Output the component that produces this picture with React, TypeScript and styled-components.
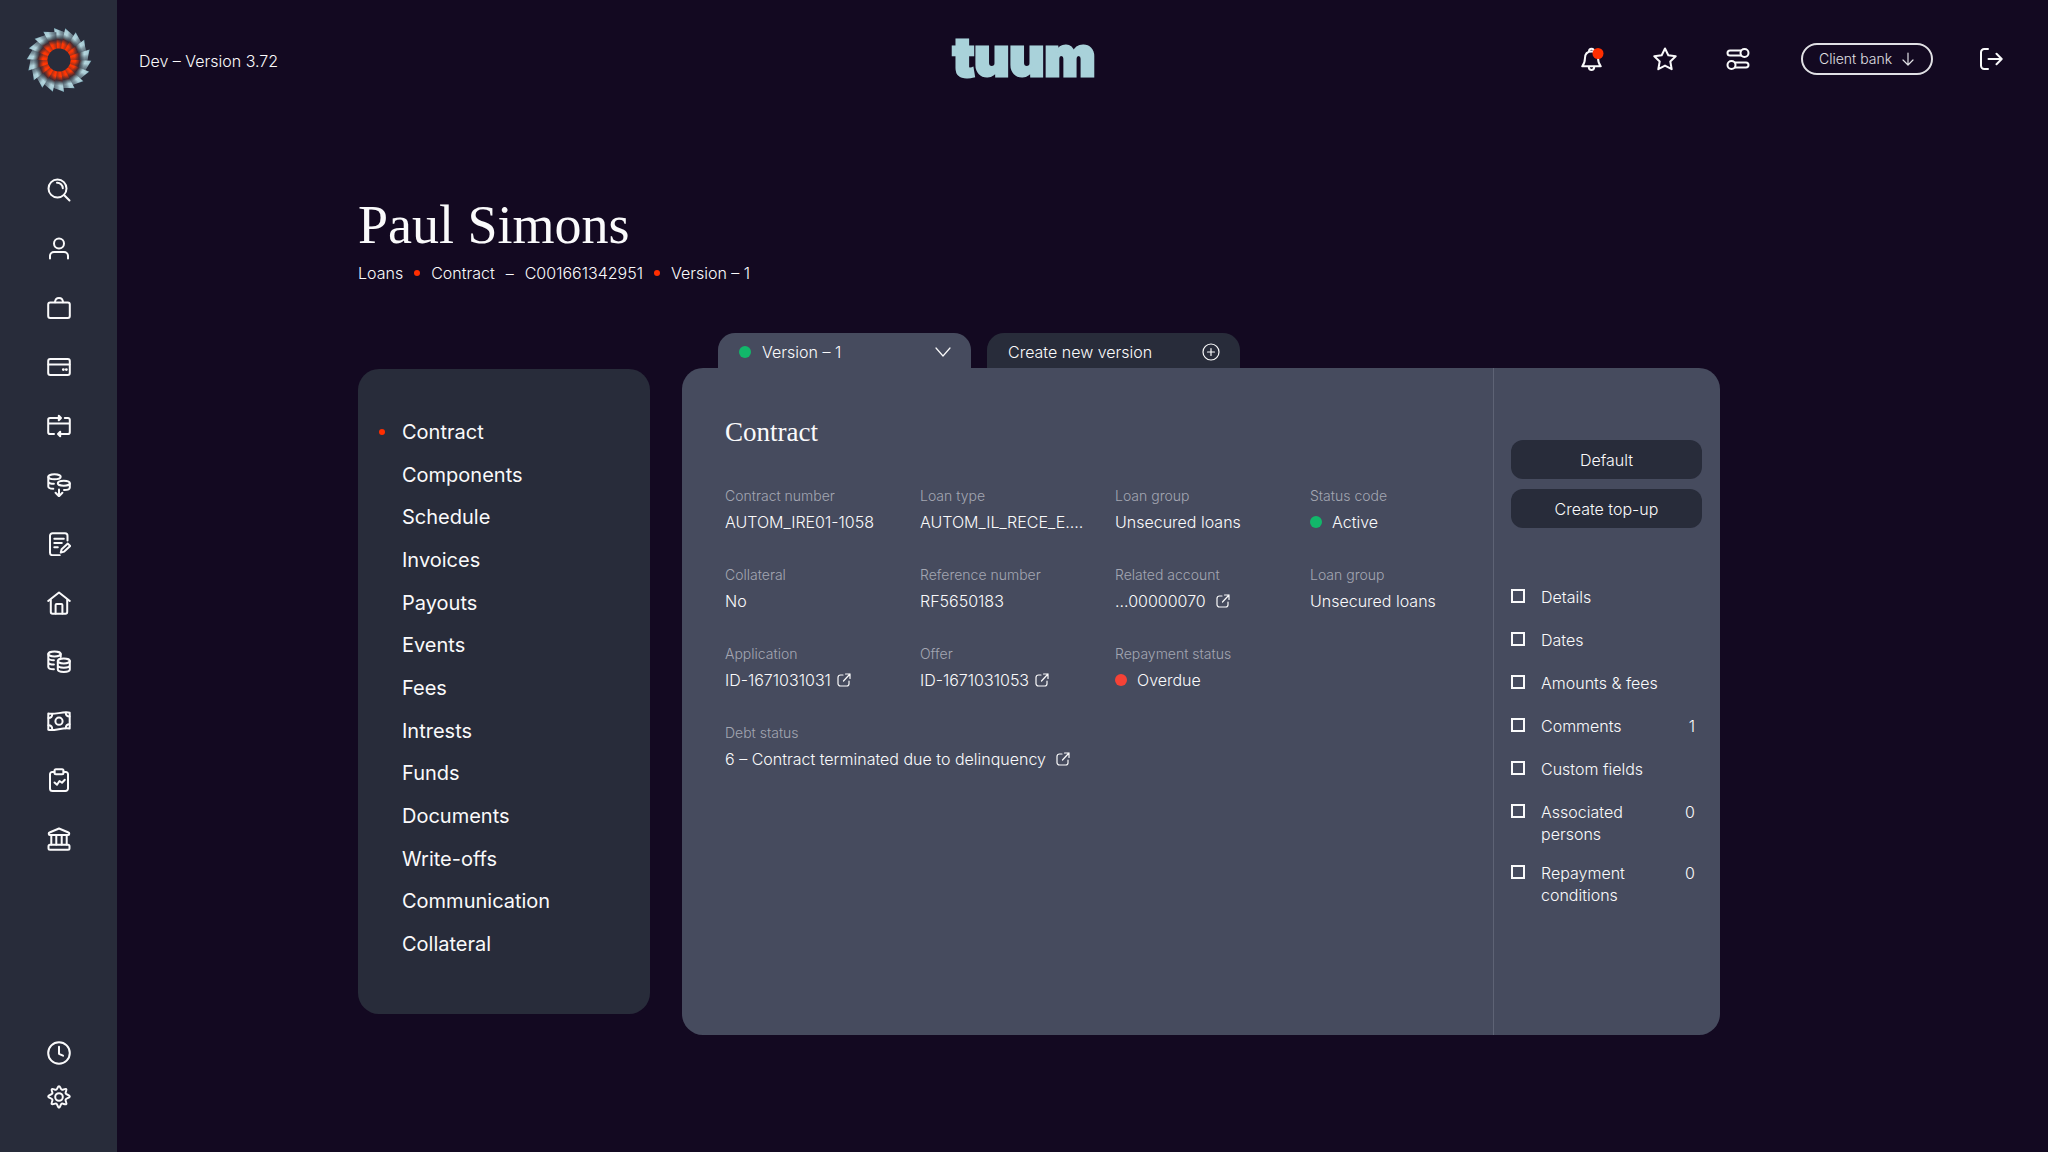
import React from 'react';
import styled, { createGlobalStyle } from 'styled-components';

const color = {
  page: '#130921',
  rail: '#282c3a',
  panel: '#464b5e',
  line: '#5e6375',
  text: '#fafafb',
  soft: '#e0e0e4',
  label: '#a3a6b2',
  red: '#ff2e00',
  alert: '#f64236',
  green: '#12b76a',
  brand: '#a9d2da',
};

const GlobalStyle = createGlobalStyle`
  *, *::before, *::after { box-sizing: border-box; }
  body {
    margin: 0;
    background: ${color.page};
    color: ${color.text};
    font-family: Inter, "Liberation Sans", sans-serif;
    font-size: 16px;
    font-weight: 300;
    line-height: 22px;
  }
  ul, dl, dd, h1, h2, p { margin: 0; padding: 0; }
  ul { list-style: none; }
  a { color: inherit; text-decoration: none; }
  button, select, input { font: inherit; color: inherit; margin: 0; }
  button { cursor: pointer; border: 0; background: none; padding: 0; }
`;

const Page = styled.div`
  display: grid;
  grid-template-columns: 117px minmax(0, 1fr);
  grid-template-rows: auto 1fr;
  min-height: 100vh;
`;

const Rail = styled.aside`
  grid-column: 1;
  grid-row: 1 / -1;
  display: flex;
  flex-direction: column;
  align-items: center;
  padding: 26px 0 33px;
  background: ${color.rail};
`;

const RailList = styled.ul<{ $bottom?: boolean }>`
  margin-top: ${(p) => (p.$bottom ? 'auto' : '66px')};
`;

const RailLink = styled.a<{ $tight?: boolean }>`
  display: flex;
  align-items: center;
  justify-content: center;
  width: 60px;
  height: ${(p) => (p.$tight ? 44 : 59)}px;
`;

const Header = styled.header`
  grid-column: 1 / -1;
  grid-row: 1;
  display: grid;
  grid-template-columns: 1fr auto 1fr;
  align-items: center;
  height: 118px;
`;

const Release = styled.p`
  padding: 4px 0 0 139px;
`;

const Brand = styled.a`
  padding-bottom: 4px;
  color: ${color.brand};
  font-size: 54px;
  font-weight: 900;
  line-height: 60px;
  -webkit-text-stroke: 3px ${color.brand};
`;

const Actions = styled.div`
  display: flex;
  align-items: center;
  justify-content: flex-end;
  gap: 46px;
  padding-right: 45px;
`;

const Shortcuts = styled.div`
  display: flex;
  gap: 49px;
  margin-right: 5px;
`;

const IconButton = styled.button`
  display: flex;
`;

const BankPicker = styled.label`
  display: flex;
  align-items: center;
  width: 132px;
  height: 32px;
  padding: 0 16px;
  border: 2px solid ${color.soft};
  border-radius: 16px;
  color: ${color.soft};
  font-size: 14px;
`;

const PlainSelect = styled.select`
  flex: 1;
  min-width: 0;
  padding: 0;
  border: 0;
  background: transparent;
  appearance: none;
  cursor: pointer;
`;

const Main = styled.main`
  grid-column: 2;
  grid-row: 2;
  padding: 75px 328px 60px 241px;
`;

const Title = styled.h1`
  font: 400 54px/64px "Liberation Serif", serif;
`;

const Crumbs = styled.nav`
  display: flex;
  align-items: center;
  gap: 11px;
  height: 24px;
  margin: 4px 0 48px;
`;

const Dot = styled.span<{ $size: number; $color: string }>`
  flex: none;
  width: ${(p) => p.$size}px;
  height: ${(p) => p.$size}px;
  border-radius: 50%;
  background: ${(p) => p.$color};
`;

const Columns = styled.div`
  display: grid;
  grid-template-columns: 292px minmax(0, 1fr);
  column-gap: 32px;
  align-items: start;
`;

const Menu = styled.nav`
  display: flex;
  min-height: 645px;
  margin-top: 36px;
  padding: 49px 21px 56px;
  border-radius: 21px;
  background: ${color.rail};
`;

const MenuList = styled.ul`
  display: flex;
  flex-direction: column;
  justify-content: space-between;
`;

const MenuLink = styled.a`
  display: flex;
  align-items: center;
  gap: 17px;
  font-size: 20px;
  font-weight: 400;
  line-height: 28px;
`;

const Tabs = styled.div`
  display: flex;
  gap: 16px;
  padding-left: 36px;
`;

const tabStyle = `
  display: flex;
  align-items: center;
  width: 253px;
  height: 35px;
  padding: 3px 20px 0 21px;
  border-radius: 17px 17px 0 0;
`;

const VersionTab = styled.label`
  ${tabStyle}
  gap: 11px;
  background: ${color.panel};
`;

const NewTab = styled.button`
  ${tabStyle}
  justify-content: space-between;
  background: ${color.rail};
`;

const Panel = styled.div`
  display: grid;
  grid-template-columns: minmax(0, 1fr) 227px;
  min-height: 667px;
  border-radius: 21px;
  background: ${color.panel};
`;

const Facts = styled.section`
  padding: 47px 0 40px 43px;
`;

const Heading = styled.h2`
  font: 400 27px/34px "Liberation Serif", serif;
`;

const FactGrid = styled.dl`
  display: grid;
  grid-template-columns: repeat(3, 195px) minmax(0, 1fr);
  row-gap: 31px;
  margin-top: 36px;
`;

const Fact = styled.div<{ $wide?: boolean }>`
  grid-column: ${(p) => (p.$wide ? '1 / -1' : 'auto')};
`;

const FactLabel = styled.dt`
  color: ${color.label};
  font-size: 14px;
`;

const FactValue = styled.dd`
  display: flex;
  align-items: center;
  gap: 10px;
  height: 22px;
  margin-top: 4px;
  white-space: nowrap;
`;

const ExternalLink = styled.a<{ $gap: number }>`
  display: flex;
  align-items: center;
  gap: ${(p) => p.$gap}px;
`;

const Side = styled.aside`
  padding: 72px 18px 40px 17px;
  border-left: 1px solid ${color.line};
`;

const SideButton = styled.button`
  display: block;
  width: 100%;
  height: 39px;
  margin-bottom: 10px;
  border-radius: 12px;
  background: ${color.rail};
`;

const CheckList = styled.ul`
  margin-top: 58px;
`;

const CheckRow = styled.li`
  display: grid;
  grid-template-columns: 14px 125px 1fr;
  column-gap: 16px;
  align-items: start;
  min-height: 43px;
  padding: 0 7px 17px 0;
`;

const Box = styled.input`
  width: 14px;
  height: 14px;
  margin-top: 3px;
  border: 2px solid ${color.text};
  appearance: none;
  &:checked { background: ${color.text}; }
`;

const Count = styled.span`
  text-align: right;
`;

const Icon = ({ size = 24, width = 2, children }: { size?: number; width?: number; children: React.ReactNode }) => (
  <svg
    width={size}
    height={size}
    viewBox={`0 0 ${size} ${size}`}
    fill="none"
    stroke="currentColor"
    strokeWidth={width}
    strokeLinecap="round"
    strokeLinejoin="round"
    aria-hidden="true"
    style={{ flex: 'none' }}
  >
    {children}
  </svg>
);

const Emblem = () => (
  <svg width="68" height="68" viewBox="-34 -34 68 68" aria-hidden="true">
    <defs>
      <linearGradient id="blade" gradientUnits="userSpaceOnUse" x1="0" y1="-11" x2="3" y2="-32">
        <stop offset="0" stopColor="#ff3200" />
        <stop offset="0.24" stopColor="#ff3805" />
        <stop offset="0.44" stopColor="#4e2a2e" />
        <stop offset="0.54" stopColor="#66777f" />
        <stop offset="0.68" stopColor="#b4d6de" />
        <stop offset="0.86" stopColor="#a9cbd4" />
        <stop offset="1" stopColor="#4f879c" />
      </linearGradient>
      <linearGradient id="shade" gradientUnits="userSpaceOnUse" x1="-1" y1="0" x2="8" y2="0">
        <stop offset="0" stopColor="#282c3a" stopOpacity="0" />
        <stop offset="0.3" stopColor="#282c3a" stopOpacity="0.35" />
        <stop offset="1" stopColor="#282c3a" stopOpacity="0.8" />
      </linearGradient>
    </defs>
    {Array.from({ length: 18 }, (_, i) => (
      <g key={i} transform={`rotate(${i * 20})`}>
        <path d="M-2.300 -11.500L1.800 -11.500L7 -27L-5 -32Z" fill="url(#blade)" />
        <path d="M-2.300 -11.500L1.800 -11.500L7 -27L-5 -32Z" fill="url(#shade)" />
      </g>
    ))}
  </svg>
);

const railIcons: { name: string; art: React.ReactNode }[] = [
  { name: 'Search', art: <><circle cx="10.500" cy="10.500" r="9" /><path d="M17 17l5.500 5.500M10 4.800a5.600 5.600 0 0 1 5.800 5.400" /></> },
  { name: 'Customers', art: <><circle cx="12" cy="6.500" r="5" /><path d="M3 21.500v-2.500a4 4 0 0 1 4-4h10a4 4 0 0 1 4 4v2.500" /></> },
  { name: 'Business', art: <><rect x="1.200" y="6.500" width="21.600" height="15.500" rx="2" /><path d="M8 6.200c.2-2.600 1.500-4.200 4-4.200s3.800 1.600 4 4.200" /></> },
  { name: 'Cards', art: <><rect x="1.200" y="4" width="21.600" height="16" rx="2" /><path d="M1.500 9.500h21" /><path d="M16.300 14.600h.1M19.300 14.600h.1" strokeWidth="2.800" /></> },
  { name: 'Transfers', art: <><path d="M12.800 4H3a1.800 1.800 0 0 0-1.800 1.800v12.400A1.800 1.800 0 0 0 3 20h4M17.800 4H21a1.800 1.800 0 0 1 1.800 1.800v12.400A1.800 1.800 0 0 1 21 20h-8.500M1.500 9.500h21" /><path d="M11.800 1.800L14 4l-2.200 2.200zM13.200 17.800L11 20l2.200 2.200z" fill="currentColor" /></> },
  { name: 'Payouts', art: <><ellipse cx="7.500" cy="3.800" rx="6.200" ry="2.500" /><path d="M1.300 4v9.500c0 1.200 2 2.200 5 2.300M1.300 9c.6 1.200 2.500 1.800 5.600 1.800" /><ellipse cx="16.800" cy="10.200" rx="6" ry="2.500" /><path d="M22.800 10.500v4c0 1.500-2.600 2.600-5.800 2.600M12 16.500V23M8.600 19.800l3.400 3.400 3.400-3.400" /></> },
  { name: 'Applications', art: <><path d="M20.500 8.500V3.700a2.500 2.500 0 0 0-2.500-2.500H5.500A2.500 2.500 0 0 0 3 3.700v17a2.500 2.500 0 0 0 2.500 2.500h7.200M7.300 6.800h9.500M7.300 11h7.500M7.300 15.300h3.500" /><path d="M20.800 11.600l2.400 2.400-6 5.600-3.400 1 .8-3.400z" /></> },
  { name: 'Mortgages', art: <><path d="M1.200 10L12 1.500 22.800 10M3.800 8.500V21a1.800 1.800 0 0 0 1.800 1.800h12.800a1.800 1.800 0 0 0 1.800-1.800V8.500" /><path d="M8.600 22.500v-8.500a1 1 0 0 1 1-1h4.800a1 1 0 0 1 1 1v8.500" /></> },
  { name: 'Deposits', art: <><ellipse cx="7.500" cy="4" rx="6.200" ry="2.400" /><path d="M1.300 4v13c0 1.300 2 2.200 5.600 2.300M1.300 8.400c.6 1.200 2.500 1.800 5.600 1.800M1.300 12.800c.6 1.200 2.500 1.800 5.600 1.800M13.700 4v3" /><ellipse cx="16.800" cy="11" rx="6" ry="2.400" /><path d="M10.800 11v8.600c0 1.400 2.700 2.400 6 2.400s6-1 6-2.400V11M10.800 15.300c0 1.400 2.700 2.400 6 2.400s6-1 6-2.400" /></> },
  { name: 'Cash', art: <><path d="M1.300 4.500c5.500 1.800 15.500-2.600 21.400-.8v15.800c-5.900-1.800-15.900 3-21.400 1.300z" /><circle cx="12" cy="12.200" r="3.600" /><path d="M1.500 9c2.200 0 3.700-1.500 3.700-3.700M18.800 3.700c0 2.400 1.500 3.700 3.700 3.700M1.500 16.300c2.200 0 3.700 1.500 3.700 4M18.800 19.200c0-2.400 1.500-4 3.700-4" /></> },
  { name: 'Reports', art: <><path d="M7.500 4H5.200A2.200 2.200 0 0 0 3 6.200v14.300a2.500 2.500 0 0 0 2.500 2.500h13a2.500 2.500 0 0 0 2.500-2.500V6.200A2.200 2.200 0 0 0 18.800 4h-2.300" /><rect x="7.500" y="1.200" width="9" height="5" rx="1.500" /><path d="M7.500 14.500l2.500 2.300 2.500-3.800 2.500 1.800 2.800-3" /></> },
  { name: 'Bank', art: <><path d="M12 1.500l9.500 4a1 1 0 0 1 .7 1V7a1 1 0 0 1-1 1H2.800a1 1 0 0 1-1-1v-.5a1 1 0 0 1 .7-1z" /><rect x="1.500" y="17.800" width="21" height="5" rx="1.500" /><path d="M4.300 8.500v9M9.300 8.500v9M14.700 8.500v9M19.700 8.500v9" /></> },
];

const footIcons: { name: string; art: React.ReactNode }[] = [
  { name: 'History', art: <><circle cx="12" cy="12" r="10.800" /><path d="M12 5.800v7l4 1.900" /></> },
  { name: 'Settings', art: <><circle cx="12" cy="12" r="3.800" /><path d="M12 1.200c1.300 0 1.500 3 2.700 3.500s3.500-1.500 4.500-.6-1.100 3.100-.6 4.300 4.200 1.600 4.200 3-3.700 2-4.200 3.200 1.500 3.500.6 4.500-3.300-1-4.500-.5-1.400 4.200-2.700 4.200-1.500-3.700-2.700-4.200-3.500 1.400-4.500.5 1.100-3.300.6-4.500-4.200-1.800-4.200-3.200 3.700-1.800 4.200-3-1.500-3.400-.6-4.300 3.300 1.100 4.500.6 1.400-3.500 2.700-3.500z" /></> },
];

const Launch = () => (
  <Icon size={14} width={1.2}>
    <path d="M6 2H3.500A2.500 2.500 0 0 0 1 4.500v6A2.500 2.500 0 0 0 3.500 13h6.300A2.200 2.200 0 0 0 12 10.800V8M8.500 1H13v4.500M13 1L6.500 8" />
  </Icon>
);

const menuItems = [
  'Contract', 'Components', 'Schedule', 'Invoices', 'Payouts', 'Events', 'Fees',
  'Intrests', 'Funds', 'Documents', 'Write-offs', 'Communication', 'Collateral',
];

type FactData = { label: string; value: string; dot?: string; link?: number; wide?: boolean };

const facts: FactData[] = [
  { label: 'Contract number', value: 'AUTOM_IRE01-1058' },
  { label: 'Loan type', value: 'AUTOM_IL_RECE_E....' },
  { label: 'Loan group', value: 'Unsecured loans' },
  { label: 'Status code', value: 'Active', dot: color.green },
  { label: 'Collateral', value: 'No' },
  { label: 'Reference number', value: 'RF5650183' },
  { label: 'Related account', value: '...00000070', link: 10 },
  { label: 'Loan group', value: 'Unsecured loans' },
  { label: 'Application', value: 'ID-1671031031', link: 6 },
  { label: 'Offer', value: 'ID-1671031053', link: 6 },
  { label: 'Repayment status', value: 'Overdue', dot: color.alert },
  { label: 'Debt status', value: '6 – Contract terminated due to delinquency', link: 10, wide: true },
];

const checks: { label: string; count?: number }[] = [
  { label: 'Details' },
  { label: 'Dates' },
  { label: 'Amounts & fees' },
  { label: 'Comments', count: 1 },
  { label: 'Custom fields' },
  { label: 'Associated persons', count: 0 },
  { label: 'Repayment conditions', count: 0 },
];

export default function App() {
  return (
    <>
      <GlobalStyle />
      <Page>
        <Rail>
          <Emblem />
          <RailList>
            {railIcons.map((item) => (
              <li key={item.name}>
                <RailLink href="#" aria-label={item.name}><Icon>{item.art}</Icon></RailLink>
              </li>
            ))}
          </RailList>
          <RailList $bottom>
            {footIcons.map((item) => (
              <li key={item.name}>
                <RailLink href="#" aria-label={item.name} $tight><Icon>{item.art}</Icon></RailLink>
              </li>
            ))}
          </RailList>
        </Rail>

        <Header>
          <Release>Dev – Version 3.72</Release>
          <Brand href="#">tuum</Brand>
          <Actions>
            <Shortcuts>
              <IconButton aria-label="Notifications">
                <Icon>
                  <path d="M2.200 19.300h18.600c-2-2.300-2.700-4.800-2.800-8.300-.1-4-2.500-6.500-6.500-6.500S5.100 7 5 11c-.1 3.500-.8 6-2.800 8.300zM8.800 20.500c.3 1.600 1.300 2.400 2.700 2.400s2.400-.8 2.700-2.400M9 4.200a2.500 2.500 0 0 1 5 0" />
                  <circle cx="18" cy="6.500" r="5.500" fill={color.red} stroke="none" />
                </Icon>
              </IconButton>
              <IconButton aria-label="Favourites">
                <Icon><path d="M12 1.500l3.300 6.800 7.400 1-5.400 5.200 1.400 7.700L12 18.600l-6.700 3.600 1.400-7.700L1.300 9.300l7.400-1z" /></Icon>
              </IconButton>
              <IconButton aria-label="Preferences">
                <Icon>
                  <circle cx="18.500" cy="6" r="4" /><path d="M15 3.500H4a2.500 2.500 0 0 0 0 5h11" />
                  <circle cx="5.500" cy="18" r="4" /><path d="M9 15.500h11a2.500 2.500 0 0 1 0 5H9" />
                </Icon>
              </IconButton>
            </Shortcuts>
            <BankPicker>
              <PlainSelect aria-label="Bank"><option>Client bank</option></PlainSelect>
              <Icon size={14} width={1.2}><path d="M7 1v12M2 8l5 5 5-5" /></Icon>
            </BankPicker>
            <IconButton aria-label="Log out">
              <Icon><path d="M9 2H5.200A3.200 3.200 0 0 0 2 5.200v13.600A3.200 3.200 0 0 0 5.200 22H9M9.500 12h13M17.500 6.800l5.200 5.200-5.200 5.200" /></Icon>
            </IconButton>
          </Actions>
        </Header>

        <Main>
          <Title>Paul Simons</Title>
          <Crumbs aria-label="Breadcrumb">
            <a href="#">Loans</a>
            <Dot $size={6} $color={color.red} />
            <a href="#">Contract</a>
            <span>–</span>
            <a href="#">C001661342951</a>
            <Dot $size={6} $color={color.red} />
            <a href="#">Version – 1</a>
          </Crumbs>

          <Columns>
            <Menu aria-label="Contract sections">
              <MenuList>
                {menuItems.map((item, i) => (
                  <li key={item}>
                    <MenuLink href="#">
                      <Dot $size={6} $color={i === 0 ? color.red : 'transparent'} />
                      {item}
                    </MenuLink>
                  </li>
                ))}
              </MenuList>
            </Menu>

            <div>
              <Tabs>
                <VersionTab>
                  <Dot $size={12} $color={color.green} />
                  <PlainSelect aria-label="Version"><option>Version – 1</option></PlainSelect>
                  <Icon size={16} width={1.2}><path d="M1 4l7 8 7-8" /></Icon>
                </VersionTab>
                <NewTab>
                  Create new version
                  <Icon size={18} width={1.2}><circle cx="9" cy="9" r="8" /><path d="M9 5.500v7M5.500 9h7" /></Icon>
                </NewTab>
              </Tabs>
              <Panel>
                <Facts>
                  <Heading>Contract</Heading>
                  <FactGrid>
                    {facts.map((f, i) => (
                      <Fact key={i} $wide={f.wide}>
                        <FactLabel>{f.label}</FactLabel>
                        <FactValue>
                          {f.dot && <Dot $size={12} $color={f.dot} />}
                          {f.link ? (
                            <ExternalLink href="#" $gap={f.link}>{f.value}<Launch /></ExternalLink>
                          ) : f.value}
                        </FactValue>
                      </Fact>
                    ))}
                  </FactGrid>
                </Facts>
                <Side>
                  <SideButton>Default</SideButton>
                  <SideButton>Create top-up</SideButton>
                  <CheckList>
                    {checks.map((c, i) => (
                      <CheckRow key={c.label}>
                        <Box type="checkbox" id={`check-${i}`} />
                        <label htmlFor={`check-${i}`}>{c.label}</label>
                        {c.count !== undefined && <Count>{c.count}</Count>}
                      </CheckRow>
                    ))}
                  </CheckList>
                </Side>
              </Panel>
            </div>
          </Columns>
        </Main>
      </Page>
    </>
  );
}
